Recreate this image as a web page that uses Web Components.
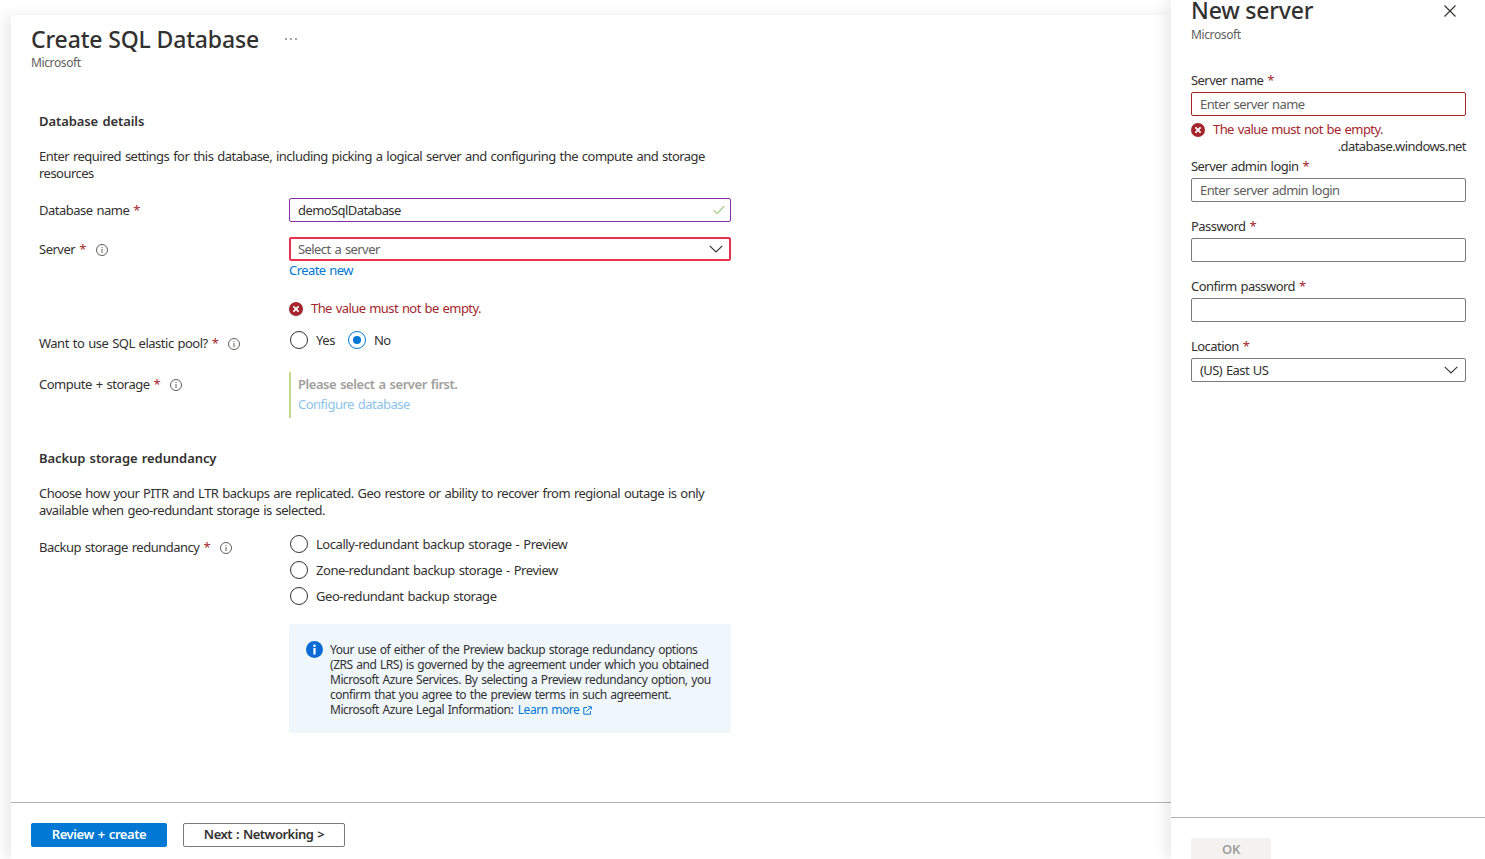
<!DOCTYPE html>
<html lang="en">
<head>
<meta charset="utf-8">
<title>Create SQL Database</title>
<style>
  html, body { height: 100%; }
  body {
    margin: 0;
    height: 859px;
    overflow: hidden;
    background: #fff;
    color: #323130;
    font: 13px/17px "Noto Sans", "Open Sans", sans-serif;
    letter-spacing: -0.57px;
    word-spacing: 1px;
    display: flex;
  }
</style>
</head>
<body>
<sql-blade>
  <blade-head slot="head" heading="Create SQL Database" more></blade-head>

  <section-title>Database details</section-title>
  <section-text>Enter required settings for this database, including picking a logical server and configuring the compute and storage resources</section-text>

  <form-row label="Database name" top="16" label-top="4">
    <text-box value="demoSqlDatabase" state="ok"></text-box>
  </form-row>

  <form-row label="Server" info top="15" label-top="4">
    <text-box value="Select a server" state="bad" dropdown muted></text-box>
    <a-link style="margin-top:1px">Create new</a-link>
    <err-line style="margin-top:21px">The value must not be empty.</err-line>
  </form-row>

  <form-row label="Want to use SQL elastic pool?" info top="13" label-top="5">
    <radio-group inline>
      <radio-item>Yes</radio-item>
      <radio-item checked>No</radio-item>
    </radio-group>
  </form-row>

  <form-row label="Compute + storage" info top="20" label-top="4">
    <hint-box>
      <b>Please select a server first.</b>
      <span>Configure database</span>
    </hint-box>
  </form-row>

  <section-title style="margin-top:30px">Backup storage redundancy</section-title>
  <section-text>Choose how your PITR and LTR backups are replicated. Geo restore or ability to recover from regional outage is only available when geo-redundant storage is selected.</section-text>

  <form-row label="Backup storage redundancy" info top="15" label-top="5">
    <radio-group>
      <radio-item>Locally-redundant backup storage - Preview</radio-item>
      <radio-item>Zone-redundant backup storage - Preview</radio-item>
      <radio-item>Geo-redundant backup storage</radio-item>
    </radio-group>
    <info-box style="margin-top:18px">Your use of either of the Preview backup storage redundancy options (ZRS and LRS) is governed by the agreement under which you obtained Microsoft Azure Services. By selecting a Preview redundancy option, you confirm that you agree to the preview terms in such agreement. Microsoft Azure Legal Information: <a-link style="margin-left:1px">Learn more <svg width="9" height="9" viewBox="0 0 9 9" fill="none" stroke="currentColor" stroke-width="1"><path d="M4 1.5H.8v6.7h6.7V5M3.5 5.5 8 1M5.3.7h3v3"/></svg></a-link></info-box>
  </form-row>

  <foot-btn slot="foot" kind="primary">Review + create</foot-btn>
  <foot-btn slot="foot" kind="outline">Next : Networking &gt;</foot-btn>
</sql-blade>

<server-panel>
  <panel-field label="Server name">
    <text-box state="invalid" muted value="Enter server name"></text-box>
    <err-line style="margin-top:5px">The value must not be empty.</err-line>
    <div style="text-align:right">.database.windows.net</div>
  </panel-field>
  <panel-field label="Server admin login" top="3">
    <text-box value="Enter server admin login" muted></text-box>
  </panel-field>
  <panel-field label="Password" top="16"><text-box></text-box></panel-field>
  <panel-field label="Confirm password" top="16"><text-box></text-box></panel-field>
  <panel-field label="Location" top="16"><text-box value="(US) East US" dropdown></text-box></panel-field>
</server-panel>

<script>
  // little helper, every element just stamps its own template
  function define(name, css, html, init) {
    const template = document.createElement('template');
    template.innerHTML = '<style>' + css + '</style>' + html;
    customElements.define(name, class extends HTMLElement {
      constructor() {
        super();
        this.attachShadow({mode: 'open'}).appendChild(template.content.cloneNode(true));
      }
      connectedCallback() {
        if (init) init(this, this.shadowRoot);
      }
    });
  }

  const INFO_ICON = '<svg width="12" height="12" viewBox="0 0 12 12" fill="none"><circle cx="6" cy="6" r="5.5" stroke="#605e5c"/><rect x="5.5" y="5" width="1" height="4" fill="#605e5c"/><rect x="5.5" y="3" width="1" height="1" fill="#605e5c"/></svg>';

  define('blade-head', `
    :host { display: block; padding: 10px 20px 0; }
    .top { display: flex; align-items: center; height: 28px; }
    h1 { margin: 0; font: 500 23px/28px "Noto Sans", sans-serif; letter-spacing: -0.15px; word-spacing: 0; color: #323130; }
    .more { margin-left: 25px; width: 14px; height: 14px; }
    .sub { margin-top: 2px; font-size: 12px; line-height: 16px; letter-spacing: -0.38px; color: #605e5c; }
  `, `
    <div class="top"><h1></h1><svg class="more" viewBox="0 0 14 14" fill="#323130"><circle cx="2" cy="7" r=".8"/><circle cx="7" cy="7" r=".8"/><circle cx="12" cy="7" r=".8"/></svg></div>
    <div class="sub">Microsoft</div>
  `, (el, root) => {
    root.querySelector('h1').textContent = el.getAttribute('heading');
  });

  define('sql-blade', `
    :host {
      display: flex;
      flex-direction: column;
      box-sizing: border-box;
      width: 1160px;
      margin: 15px 0 0 11px;
      height: 844px;
      background: #fff;
      box-shadow: -6px 0 12px rgba(0,0,0,.08);
    }
    .head { flex: none; }
    .body { flex: 1; padding: 40px 0 0 28px; width: 692px; box-sizing: content-box; }
    .foot { flex: none; box-sizing: border-box; height: 57px; border-top: 1px solid #b3b3b3; padding: 20px 20px 0; display: flex; gap: 16px; align-items: flex-start; }
  `, `
    <div class="head"><slot name="head"></slot></div>
    <div class="body"><slot></slot></div>
    <div class="foot"><slot name="foot"></slot></div>
  `);

  define('section-title', `
    :host { display: block; font-weight: 600; line-height: 20px; letter-spacing: -0.08px; color: #323130; }
  `, '<slot></slot>');

  define('section-text', `
    :host { display: block; margin-top: 17px; width: 680px; line-height: 17px; letter-spacing: -0.52px; color: #323130; }
  `, '<slot></slot>');

  define('form-row', `
    :host { display: flex; }
    .label { flex: none; width: 250px; box-sizing: border-box; display: flex; align-items: flex-start; letter-spacing: -0.5px; }
    .star { color: #a4262c; margin-left: 4px; }
    .i { display: none; margin: 3px 0 0 10px; line-height: 0; }
    :host([info]) .i { display: inline-block; }
    .ctrl { flex: none; width: 442px; display: flex; flex-direction: column; }
  `, `
    <div class="label"><span class="t"></span><span class="star">*</span><span class="i">${INFO_ICON}</span></div>
    <div class="ctrl"><slot></slot></div>
  `, (el, root) => {
    root.querySelector('.t').textContent = el.getAttribute('label');
    el.style.marginTop = (el.getAttribute('top') || 0) + 'px';
    root.querySelector('.label').style.paddingTop = (el.getAttribute('label-top') || 0) + 'px';
  });

  define('text-box', `
    :host { display: block; }
    .box {
      box-sizing: border-box;
      display: flex;
      align-items: center;
      height: 24px;
      padding: 0 8px;
      border: 1px solid #7a7a7a;
      border-radius: 2px;
      background: #fff;
      color: #323130;
      white-space: nowrap;
      letter-spacing: -0.58px;
    }
    :host([muted]) .box { color: #605e5c; }
    :host([state="ok"]) .box { border-color: #8a2da5; }
    :host([state="bad"]) .box { border: 2px solid #e8304f; padding: 0 7px; }
    :host([state="invalid"]) .box { border-color: #a4262c; }
    .v { flex: 1; }
    svg { display: none; flex: none; }
    :host([dropdown]) .chev { display: block; margin-right: -1px; }
    :host([state="ok"]) .tick { display: block; margin-right: -3px; }
  `, `
    <div class="box"><span class="v"></span>
      <svg class="tick" width="12" height="10" viewBox="0 0 12 10" fill="none" stroke="#6cb33f" stroke-width="1"><path d="M.7 5.2 4.2 8.7 11.3 1"/></svg>
      <svg class="chev" width="14" height="8" viewBox="0 0 14 8" fill="none" stroke="#323130" stroke-width="1.1"><path d="M.7.8 7 7 13.3.8"/></svg>
    </div>
  `, (el, root) => {
    root.querySelector('.v').textContent = el.getAttribute('value') || '';
  });

  define('a-link', `
    :host { display: inline; color: #0078d4; }
    ::slotted(svg) { vertical-align: -1px; }
  `, '<slot></slot>');

  define('err-line', `
    :host { display: flex; align-items: center; color: #a4262c; height: 17px; }
    svg { flex: none; margin-right: 8px; }
  `, `
    <svg width="14" height="14" viewBox="0 0 14 14"><circle cx="7" cy="7" r="7" fill="#a4262c"/><path d="M4.4 4.4l5.2 5.2M9.6 4.4l-5.2 5.2" stroke="#fff" stroke-width="1.8"/></svg>
    <slot></slot>
  `);

  define('radio-group', `
    :host { display: flex; flex-direction: column; gap: 6px; margin-left: 1px; }
    :host([inline]) { flex-direction: row; gap: 13px; }
  `, '<slot></slot>');

  define('radio-item', `
    :host { display: flex; align-items: center; height: 20px; gap: 8px; color: #323130; letter-spacing: -0.45px; }
    .r { box-sizing: border-box; width: 18px; height: 18px; border: 1px solid #323130; border-radius: 50%; display: flex; align-items: center; justify-content: center; }
    :host([checked]) .r { border-color: #0078d4; }
    :host([checked]) .r::after { content: ""; width: 8px; height: 8px; border-radius: 50%; background: #0078d4; }
  `, '<span class="r"></span><slot></slot>');

  define('hint-box', `
    :host { display: flex; flex-direction: column; gap: 3px; box-sizing: border-box; height: 46px; padding: 4px 0 0 7px; border-left: 2px solid #bfdc8e; }
    ::slotted(b) { font-weight: 600; color: #a19f9d; letter-spacing: -0.45px; }
    ::slotted(span) { color: #8cc3eb; letter-spacing: -0.5px; }
  `, '<slot></slot>');

  define('info-box', `
    :host { display: flex; box-sizing: border-box; height: 109px; padding: 18px 16px 0 17px; gap: 7px; background: #eff6fc; border-radius: 2px; font-size: 12px; line-height: 15px; letter-spacing: -0.47px; color: #323130; }
    svg { flex: none; margin-top: -1px; }
  `, `
    <svg width="17" height="17" viewBox="0 0 17 17"><circle cx="8.5" cy="8.5" r="8.5" fill="#0b6ad4"/><rect x="7.4" y="7" width="2.2" height="6.5" fill="#fff"/><circle cx="8.5" cy="4.7" r="1.3" fill="#fff"/></svg>
    <div><slot></slot></div>
  `);

  define('foot-btn', `
    :host { display: block; }
    .b { box-sizing: border-box; height: 24px; padding-bottom: 1px; display: flex; align-items: center; justify-content: center; border-radius: 2px; font-weight: 600; letter-spacing: -0.42px; }
    :host([kind="primary"]) .b { width: 136px; background: #0078d4; color: #fff; }
    :host([kind="outline"]) .b { width: 162px; background: #fff; border: 1px solid #7a7a7a; color: #323130; letter-spacing: -0.5px; }
    :host([kind="off"]) .b { width: 80px; background: #f3f2f1; color: #a19f9d; }
  `, '<div class="b"><slot></slot></div>');

  define('panel-field', `
    :host { display: block; }
    .l { display: block; line-height: 17px; margin-bottom: 3px; letter-spacing: -0.55px; }
    .star { color: #a4262c; margin-left: 4px; }
  `, `
    <div class="l"><span class="t"></span><span class="star">*</span></div>
    <slot></slot>
  `, (el, root) => {
    root.querySelector('.t').textContent = el.getAttribute('label');
    el.style.marginTop = (el.getAttribute('top') || 0) + 'px';
  });

  define('server-panel', `
    :host {
      display: flex;
      flex-direction: column;
      flex: none;
      width: 314px;
      height: 859px;
      box-sizing: border-box;
      background: #fff;
      box-shadow: -6px 0 12px rgba(0,0,0,.08);
      position: relative;
    }
    .head { flex: none; padding: 0 19px 0 20px; display: flex; justify-content: space-between; height: 72px; }
    h2 { margin: -4px 0 0; font: 500 23px/28px "Noto Sans", sans-serif; letter-spacing: -0.2px; word-spacing: 0; color: #323130; }
    .sub { margin-top: 3px; font-size: 12px; line-height: 16px; letter-spacing: -0.38px; color: #605e5c; }
    .close { margin: 5px 10px 0 0; }
    .body { flex: 1; padding: 0 19px 0 20px; }
    .foot { flex: none; box-sizing: border-box; height: 42px; border-top: 1px solid #b3b3b3; padding: 20px 20px 0; overflow: hidden; }
  `, `
    <div class="head">
      <div><h2>New server</h2><div class="sub">Microsoft</div></div>
      <svg class="close" width="12" height="12" viewBox="0 0 12 12" stroke="#323130" stroke-width="1.1"><path d="M.5.5l11 11M11.5.5l-11 11"/></svg>
    </div>
    <div class="body"><slot></slot></div>
    <div class="foot"><foot-btn kind="off">OK</foot-btn></div>
  `);
</script>
</body>
</html>
